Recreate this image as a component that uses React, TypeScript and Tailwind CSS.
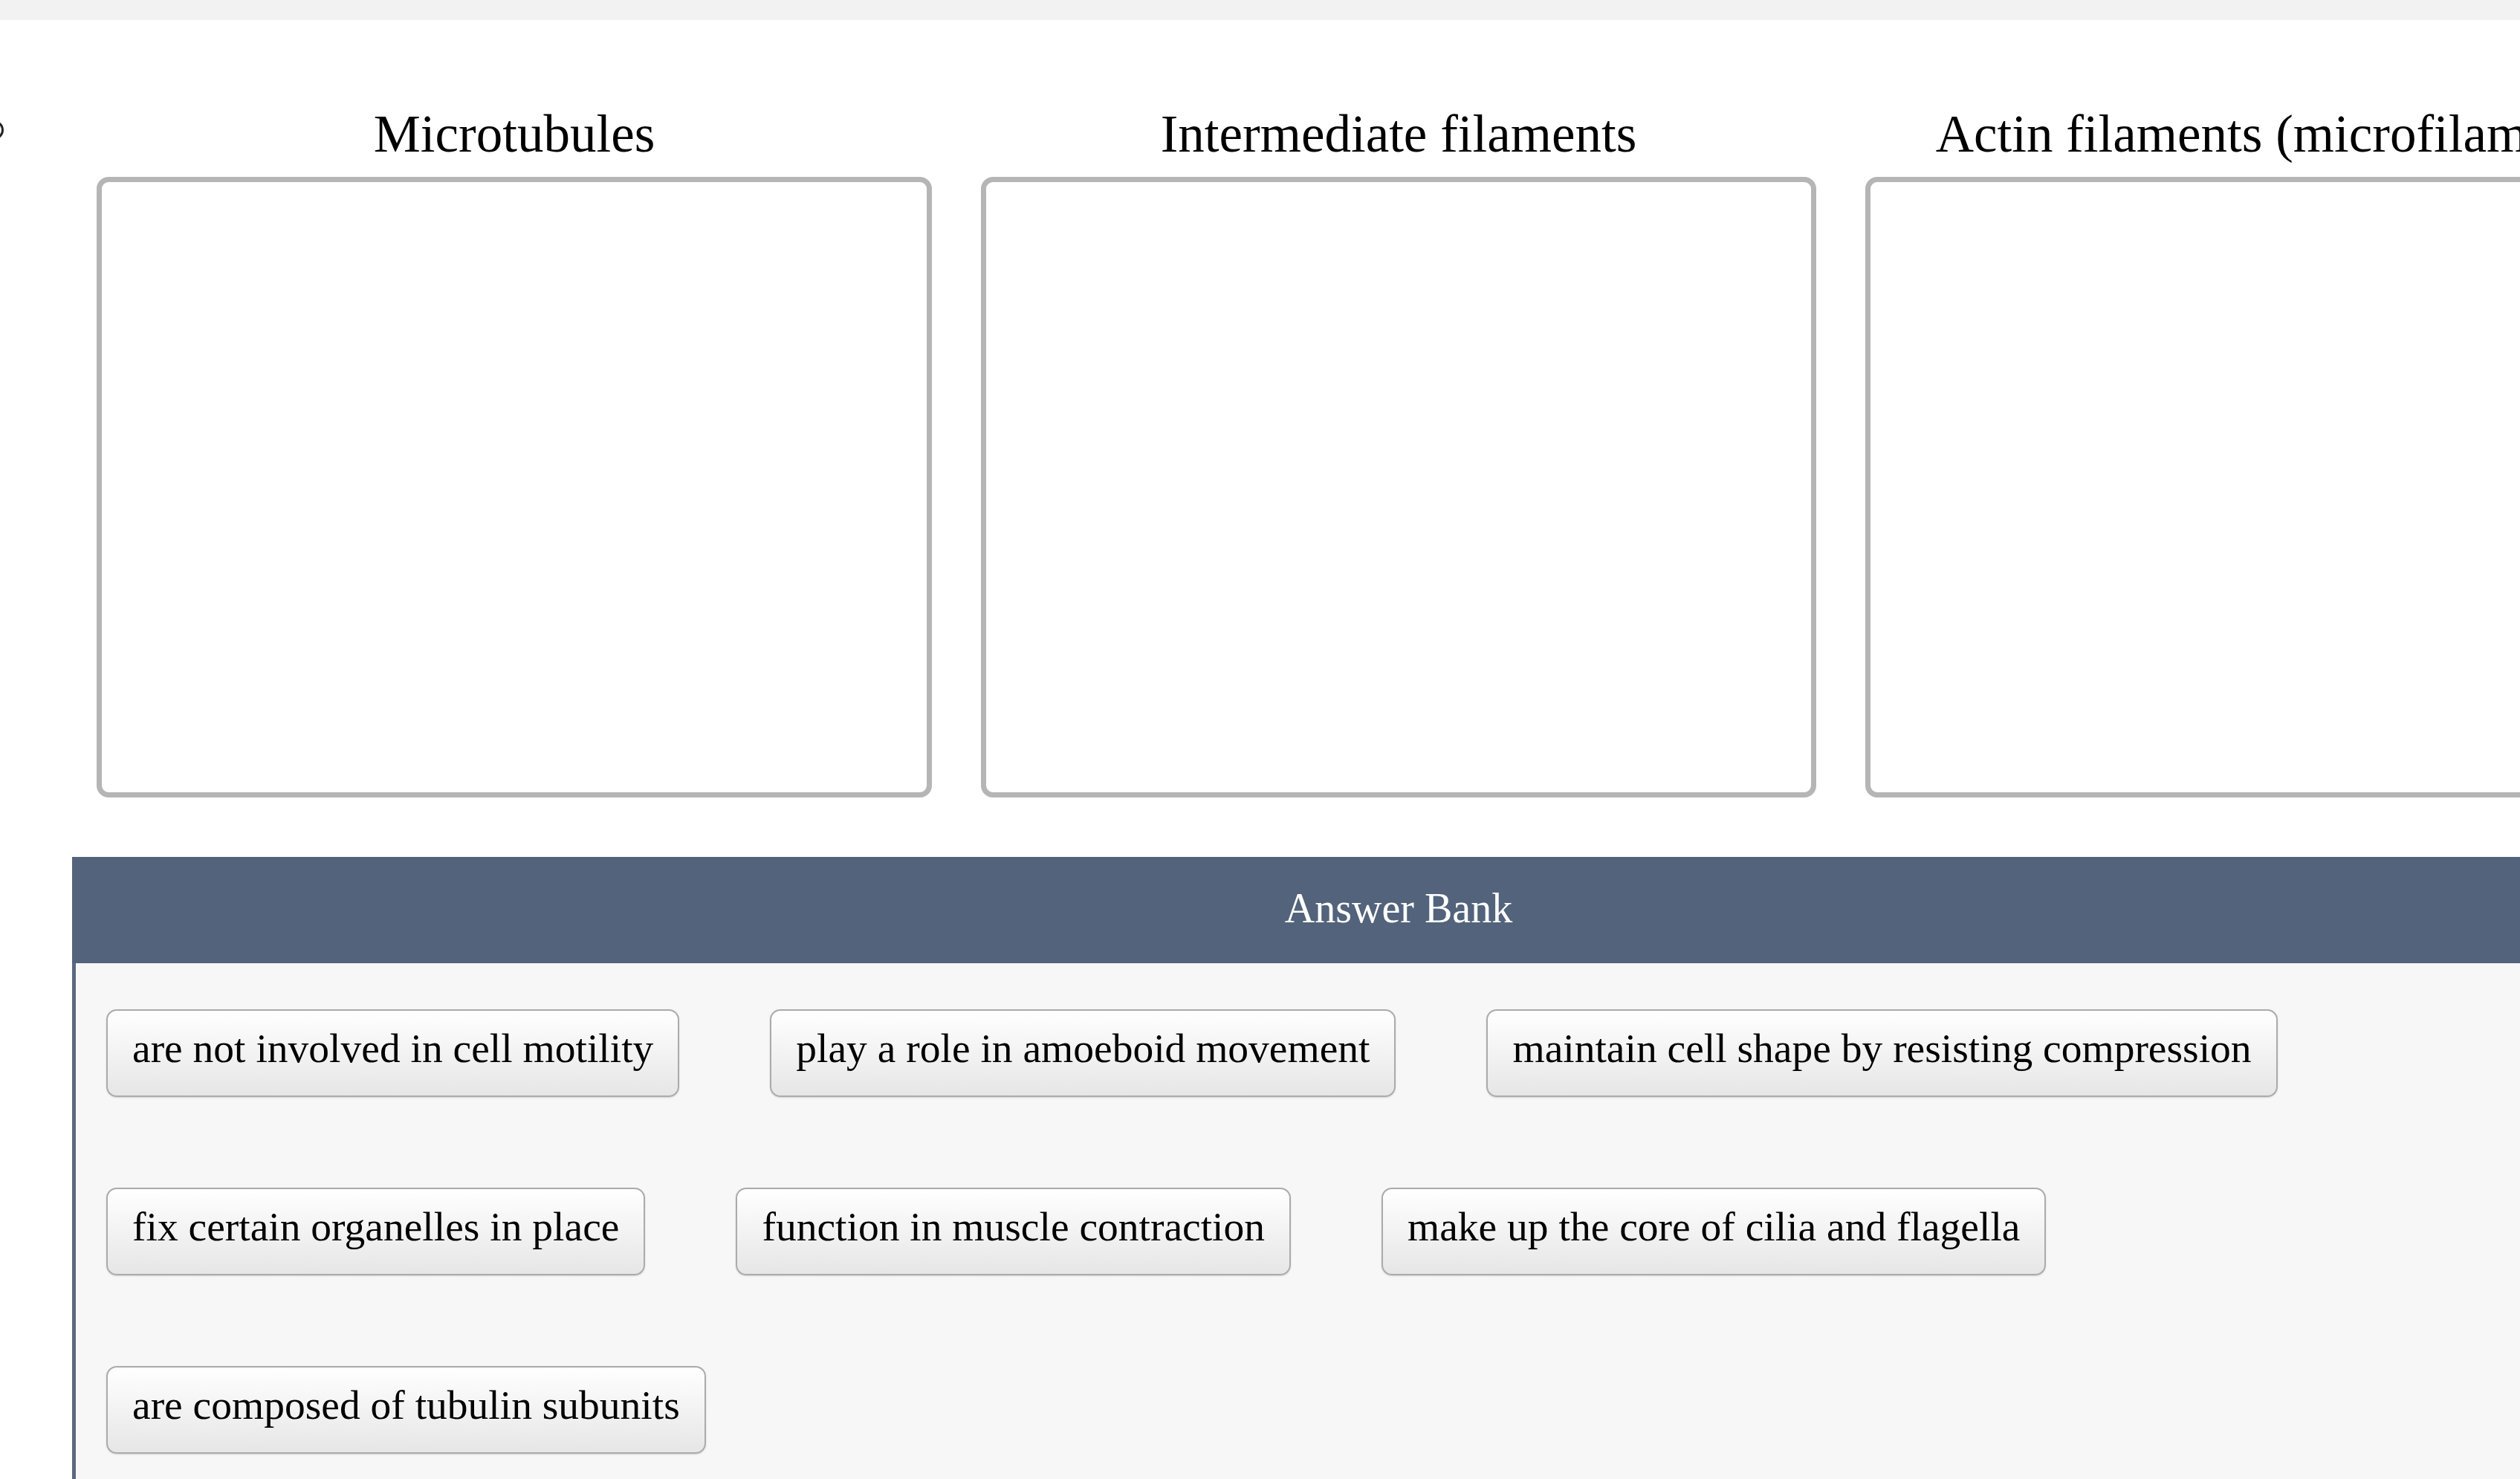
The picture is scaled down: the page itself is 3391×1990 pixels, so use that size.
import React from "react";

const chips: string[] = [
  "are not involved in cell motility",
  "play a role in amoeboid movement",
  "maintain cell shape by resisting compression",
  "fix certain organelles in place",
  "function in muscle contraction",
  "make up the core of cilia and flagella",
  "are composed of tubulin subunits",
];

const columns: string[] = ["Microtubules", "Intermediate filaments", "Actin filaments (microfilaments)"];

export default function App() {
  return (
    <div className="relative w-[3391px] h-[1990px] overflow-hidden bg-white font-['Liberation_Serif','Times_New_Roman',serif] text-black">
      <div className="h-[27px] bg-[#f2f2f2]" />
      <div className="absolute left-[-21px] top-[162px] w-[26px] h-[26px] rounded-full border-[3px] border-[#222]" />
      <div className="ml-[97px] w-[3570px] pt-[118px]">
        <div className="grid grid-cols-3 gap-[66px] px-[33px]">
          {columns.map((c) => (
            <div key={c} className="flex flex-col">
              <div className="h-[71px] text-[71px] leading-[71px] text-center whitespace-nowrap">{c}</div>
              <div className="mt-[22px] h-[835px] rounded-[16px] border-[7px] border-[#b5b5b5] bg-white" />
            </div>
          ))}
        </div>
        <div className="mt-[80px]">
          <div className="h-[143px] bg-[#52637b] pt-[42px] text-center text-[56px] leading-[55px] text-white">
            Answer Bank
          </div>
          <div className="h-[800px] border-l-[5px] border-[#5b6880] bg-[#f7f7f7] pl-[41px] pr-[40px] pt-[62px]">
            <div className="flex flex-wrap gap-x-[122px] gap-y-[122px]">
              {chips.map((t) => (
                <div
                  key={t}
                  className="rounded-[14px] border-2 border-[#ababab] bg-gradient-to-b from-white to-[#e6e6e6] px-[33px] pt-[23px] pb-[35px] text-[55.5px] leading-[56px] whitespace-nowrap shadow-[0_1px_2px_rgba(0,0,0,0.15)]"
                >
                  {t}
                </div>
              ))}
            </div>
          </div>
        </div>
      </div>
    </div>
  );
}
